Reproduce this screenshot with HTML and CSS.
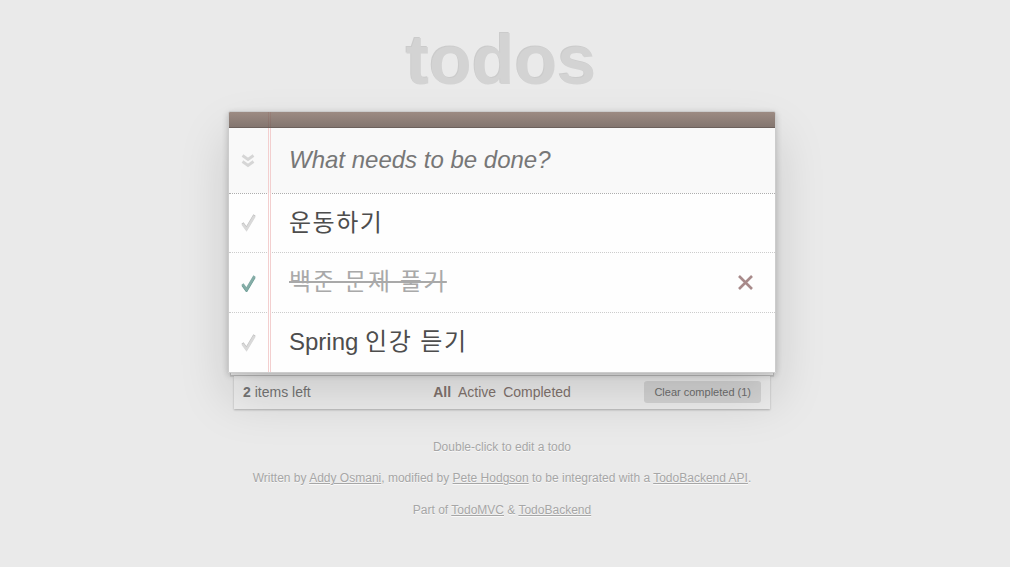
FILE: index.html
```html
<!DOCTYPE html>
<html lang="ko">
<head>
<meta charset="utf-8">
<title>TodoMVC</title>
<link rel="stylesheet" href="styles.css">
</head>
<body>
<section class="todoapp">
  <h1 class="title">todos</h1>
  <div class="card">
    <div class="card-bar"></div>
    <div class="new-row">
      <span class="toggle-all">
        <svg width="14" height="14" viewBox="0 0 14 14"><path d="M1.5 1.5 L7 5.5 L12.5 1.5 M1.5 7.5 L7 11.5 L12.5 7.5" fill="none" stroke="#d6d6d6" stroke-width="2.8" stroke-linejoin="miter"/></svg>
      </span>
      <input class="new-todo" placeholder="What needs to be done?">
    </div>
    <ul class="todo-list">
      <li class="todo">
        <span class="check">
          <svg width="17" height="18" viewBox="0 0 17 18"><path d="M2.5 10 L6.5 15.5 L14.5 2" fill="none" stroke="#bfbfbf" stroke-width="2.6" transform="translate(0,-1)"/><path d="M2.5 10 L6.5 15.5 L14.5 2" fill="none" stroke="#d9d9d9" stroke-width="2.6"/></svg>
        </span>
        <label class="todo-label"><span class="ko">운동하기</span></label>
      </li>
      <li class="todo completed">
        <span class="check">
          <svg width="17" height="18" viewBox="0 0 17 18"><path d="M2.5 10 L6.5 15.5 L14.5 2" fill="none" stroke="#669991" stroke-width="2.6" transform="translate(0,1)"/><path d="M2.5 10 L6.5 15.5 L14.5 2" fill="none" stroke="#85ada7" stroke-width="2.6"/></svg>
        </span>
        <label class="todo-label"><span class="ko">백준 문제 풀기</span></label>
        <span class="destroy">
          <svg width="17" height="17" viewBox="0 0 17 17"><path d="M2 2 L15 15 M15 2 L2 15" fill="none" stroke="#a88a8a" stroke-width="2.6"/></svg>
        </span>
      </li>
      <li class="todo">
        <span class="check">
          <svg width="17" height="18" viewBox="0 0 17 18"><path d="M2.5 10 L6.5 15.5 L14.5 2" fill="none" stroke="#bfbfbf" stroke-width="2.6" transform="translate(0,-1)"/><path d="M2.5 10 L6.5 15.5 L14.5 2" fill="none" stroke="#d9d9d9" stroke-width="2.6"/></svg>
        </span>
        <label class="todo-label">Spring <span class="ko">인강 듣기</span></label>
      </li>
    </ul>
  </div>
  <div class="sheet"></div>
  <footer class="footer">
    <span class="todo-count"><strong>2</strong> items left</span>
    <ul class="filters">
      <li><a class="filter selected" href="#/">All</a></li>
      <li><a class="filter" href="#/active">Active</a></li>
      <li><a class="filter" href="#/completed">Completed</a></li>
    </ul>
    <span class="clear-wrap"><button class="clear-completed">Clear completed (1)</button></span>
  </footer>
  <div class="info">
    <p>Double-click to edit a todo</p>
    <p>Written by <a href="#">Addy Osmani</a>, modified by <a href="#">Pete Hodgson</a> to be integrated with a <a href="#">TodoBackend API</a>.</p>
    <p>Part of <a href="#">TodoMVC</a> &amp; <a href="#">TodoBackend</a></p>
  </div>
</section>
</body>
</html>
```

FILE: styles.css
```css
html, body {
  margin: 0;
  padding: 0;
}

body {
  background: #eaeaea;
  font: 14px/1.4 "Liberation Sans", Arial, "Noto Sans CJK KR", sans-serif;
  color: #4d4d4d;
}

.todoapp {
  width: 548px;
  margin-left: 228px;
  padding-top: 25px;
}

.title {
  margin: 0 0 16px;
  padding-right: 2px;
  font-size: 70px;
  line-height: 70px;
  font-weight: bold;
  text-align: center;
  color: #d3d3d3;
  text-shadow: -1px -1px 0 rgba(0, 0, 0, 0.13);
}

.card {
  position: relative;
  background: rgba(255, 255, 255, 0.92);
  border: 1px solid #ccc;
  border-radius: 2px 2px 0 0;
  box-shadow: 0 2px 6px 0 rgba(0, 0, 0, 0.2), 0 25px 50px 0 rgba(0, 0, 0, 0.15);
}

.card::before {
  content: "";
  position: absolute;
  top: 0;
  bottom: 0;
  left: 39px;
  width: 1px;
  border-left: 1px solid #f3cfcf;
  border-right: 1px solid #f3cfcf;
  z-index: 1;
}

.card-bar {
  position: relative;
  z-index: 2;
  height: 15px;
  border-bottom: 1px solid #6c615c;
  background: linear-gradient(rgba(132, 110, 100, 0.8), rgba(101, 84, 76, 0.8));
  border-radius: 1px 1px 0 0;
}

.new-row {
  display: flex;
  align-items: center;
  background: rgba(0, 0, 0, 0.02);
}

.toggle-all {
  width: 40px;
  flex: none;
  display: flex;
  justify-content: center;
  padding-top: 1px;
  padding-right: 2px;
  box-sizing: border-box;
}

.toggle-all svg {
  display: block;
}

.new-todo {
  flex: 1;
  min-width: 0;
  margin: 0;
  border: 0;
  outline: none;
  background: transparent;
  font: 24px/33.6px "Liberation Sans", Arial, "Noto Sans CJK KR", sans-serif;
  color: #4d4d4d;
  padding: 15px 16px 16px 20px;
}

.new-todo::placeholder {
  color: #777;
  font-style: italic;
  opacity: 1;
}

.todo-list {
  margin: 0;
  padding: 0;
  list-style: none;
  border-top: 1px dotted #adadad;
}

.todo {
  display: flex;
  align-items: center;
  font-size: 24px;
  border-bottom: 1px dotted #ccc;
}

.todo:last-child {
  border-bottom: none;
}

.check {
  width: 40px;
  flex: none;
  display: flex;
  justify-content: center;
  padding-right: 2px;
  box-sizing: border-box;
}

.check svg {
  display: block;
}

.todo-label {
  flex: 1;
  display: block;
  white-space: pre;
  margin-left: 5px;
  padding: 15px 0 15px 15px;
  line-height: 1.2;
  color: #4d4d4d;
}

.ko {
  letter-spacing: 1.5px;
}

.completed .todo-label {
  color: #a9a9a9;
  text-decoration: line-through;
}

.destroy {
  width: 40px;
  height: 40px;
  flex: none;
  margin-right: 10px;
  display: flex;
  align-items: center;
  justify-content: center;
}

.sheet {
  height: 2px;
  margin: 0 2px;
  background: #fbfbfb;
  border: 1px solid #c8c8c8;
  border-top: 0;
  box-shadow: 0 1px 1px rgba(0, 0, 0, 0.12);
}

.footer {
  margin: 0 6px;
  height: 33px;
  padding: 0 9px;
  display: grid;
  grid-template-columns: 1fr auto 1fr;
  align-items: center;
  background: #efefef;
  color: #777;
  box-shadow: 0 1px 2px rgba(0, 0, 0, 0.25);
}

.todo-count {
  justify-self: start;
}

.filters {
  margin: 0;
  padding: 0;
  list-style: none;
  display: flex;
  gap: 3px;
}

.filter {
  color: #83756f;
  margin: 2px;
  text-decoration: none;
}

.filter.selected {
  font-weight: bold;
}

.clear-wrap {
  justify-self: end;
  display: flex;
}

.clear-completed {
  border: 0;
  margin: 0;
  font: 11px/21px "Liberation Sans", Arial, sans-serif;
  color: #6f6f6f;
  background: rgba(0, 0, 0, 0.1);
  padding: 0 10px;
  border-radius: 3px;
  box-shadow: 0 -1px 0 0 rgba(0, 0, 0, 0.1);
}

.info {
  margin-top: 30px;
  color: #a6a6a6;
  font-size: 12px;
  text-align: center;
  text-shadow: 0 1px 0 rgba(255, 255, 255, 0.7);
}

.info p {
  margin: 0 0 14.5px;
  line-height: 17px;
}

.info a {
  color: inherit;
}
```
